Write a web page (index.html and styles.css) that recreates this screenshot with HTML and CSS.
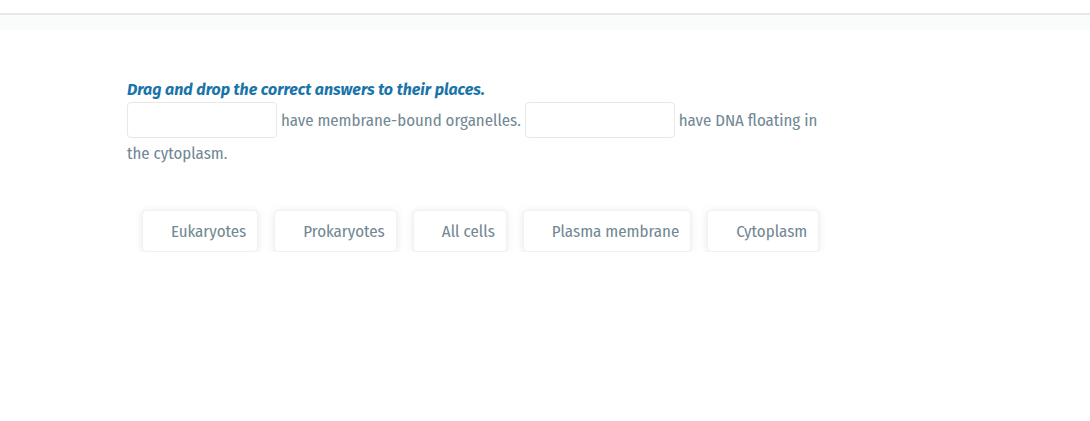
FILE: index.html
```html
<!DOCTYPE html>
<html>
<head>
<meta charset="utf-8">
<link rel="stylesheet" href="styles.css">
</head>
<body>
<div class="topbar"></div>
<div class="band"></div>
<main class="task">
  <div class="intro">Drag and drop the correct answers to their places.</div>
  <p class="sentence"><span class="drop"></span> have membrane-bound organelles. <span class="drop"></span> have DNA floating in the cytoplasm.</p>
  <div class="options">
    <div class="chip">Eukaryotes</div>
    <div class="chip">Prokaryotes</div>
    <div class="chip">All cells</div>
    <div class="chip">Plasma membrane</div>
    <div class="chip">Cytoplasm</div>
  </div>
</main>
</body>
</html>
```
FILE: styles.css
```css
html, body { margin: 0; padding: 0; background: #fff; }
body { font-family: "Fira Sans Condensed", "Fira Sans", Roboto, "Liberation Sans", sans-serif; color: #728893; }
.topbar { height: 13px; border-bottom: 2px solid #e7e8e9; }
.band { height: 15px; background: #fafcfb; }
.task { padding: 49px 0 0 127px; width: 700px; }
.intro { font-family: "Fira Sans", Roboto, sans-serif; font-weight: bold; font-style: italic; font-size: 16px; color: #1a74a9; line-height: 22px; }
.sentence { margin: 0; font-size: 16.8px; line-height: 31px; width: 700px; }
.drop { display: inline-block; width: 148px; height: 34px; border: 1px solid #e6e8ea; border-radius: 4px; vertical-align: -12px; background: #fff; margin: 1px 0 0; }
.options { display: flex; gap: 16px; margin: 41px 0 0 15px; }
.chip { flex: none; white-space: nowrap; height: 42px; box-sizing: border-box; display: flex; align-items: center; padding: 0 11px 0 28px; font-size: 16.85px; border: 1px solid #f0f1f2; border-radius: 4px; background: #fff; box-shadow: 0 1px 8px rgba(0,0,0,0.09); }
```
